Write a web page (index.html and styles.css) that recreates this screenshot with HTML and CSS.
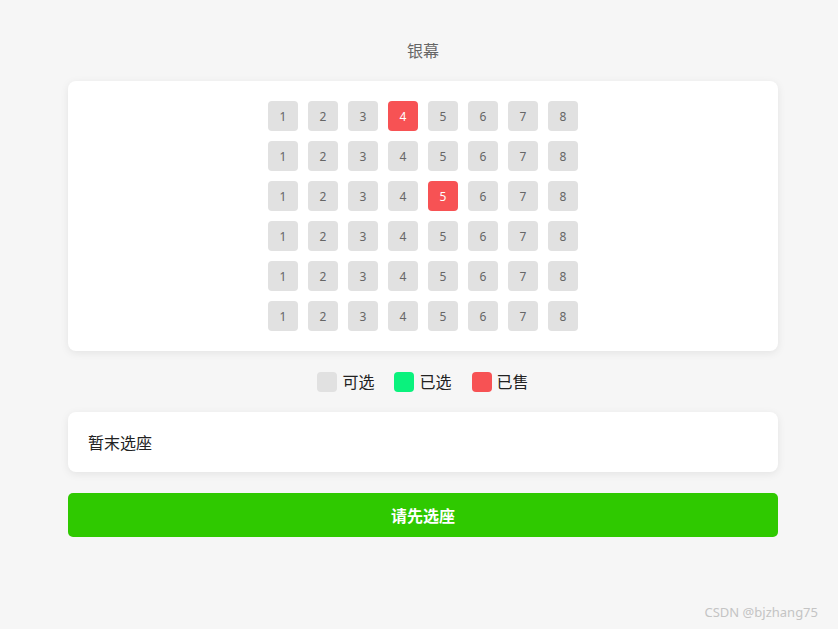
FILE: index.html
```html
<!DOCTYPE html>
<html lang="zh-CN">
<head>
  <meta charset="UTF-8">
  <meta name="viewport" content="width=device-width, initial-scale=1.0">
  <title>选座</title>
  <link rel="stylesheet" href="styles.css">
</head>
<body>
  <div class="page">
    <div class="screen">银幕</div>

    <div class="seat-card">
      <div class="seat-row">
        <div class="seat">1</div><div class="seat">2</div><div class="seat">3</div><div class="seat sold">4</div>
        <div class="seat">5</div><div class="seat">6</div><div class="seat">7</div><div class="seat">8</div>
      </div>
      <div class="seat-row">
        <div class="seat">1</div><div class="seat">2</div><div class="seat">3</div><div class="seat">4</div>
        <div class="seat">5</div><div class="seat">6</div><div class="seat">7</div><div class="seat">8</div>
      </div>
      <div class="seat-row">
        <div class="seat">1</div><div class="seat">2</div><div class="seat">3</div><div class="seat">4</div>
        <div class="seat sold">5</div><div class="seat">6</div><div class="seat">7</div><div class="seat">8</div>
      </div>
      <div class="seat-row">
        <div class="seat">1</div><div class="seat">2</div><div class="seat">3</div><div class="seat">4</div>
        <div class="seat">5</div><div class="seat">6</div><div class="seat">7</div><div class="seat">8</div>
      </div>
      <div class="seat-row">
        <div class="seat">1</div><div class="seat">2</div><div class="seat">3</div><div class="seat">4</div>
        <div class="seat">5</div><div class="seat">6</div><div class="seat">7</div><div class="seat">8</div>
      </div>
      <div class="seat-row">
        <div class="seat">1</div><div class="seat">2</div><div class="seat">3</div><div class="seat">4</div>
        <div class="seat">5</div><div class="seat">6</div><div class="seat">7</div><div class="seat">8</div>
      </div>
    </div>

    <div class="legend">
      <div class="legend-item"><span class="swatch"></span>可选</div>
      <div class="legend-item"><span class="swatch selected"></span>已选</div>
      <div class="legend-item"><span class="swatch sold"></span>已售</div>
    </div>

    <div class="info-card">暂末选座</div>

    <button class="submit-button">请先选座</button>
  </div>

  <div class="watermark">CSDN @bjzhang75</div>
</body>
</html>
```

FILE: styles.css
```css
body {
  margin: 0;
  padding: 0;
  background-color: #f6f6f6;
  font-family: "Noto Sans", "Noto Sans CJK SC", sans-serif;
  color: #333;
}

.page {
  padding: 40px 60px 0 68px;
}

.screen {
  text-align: center;
  font-size: 16px;
  line-height: 22px;
  color: #666;
  margin-bottom: 19px;
}

.seat-card {
  background: white;
  border-radius: 8px;
  box-shadow: 0 2px 8px rgba(0, 0, 0, 0.08);
  padding: 20px 0;
  display: flex;
  flex-direction: column;
  align-items: center;
  gap: 10px;
}

.seat-row {
  display: flex;
  gap: 10px;
}

.seat {
  width: 30px;
  height: 30px;
  border-radius: 4px;
  background-color: #e1e1e1;
  color: #666;
  font-size: 12px;
  display: flex;
  justify-content: center;
  align-items: center;
}

.seat.sold {
  background-color: #f75254;
  color: white;
}

.legend {
  display: flex;
  justify-content: center;
  gap: 20px;
  margin: 21px 0 20px;
}

.legend-item {
  display: flex;
  align-items: center;
  gap: 5px;
  font-size: 16px;
  line-height: 20px;
  color: #222;
}

.swatch {
  width: 20px;
  height: 20px;
  border-radius: 4px;
  background-color: #e1e1e1;
}

.swatch.selected {
  background-color: #0af27d;
}

.swatch.sold {
  background-color: #f75254;
}

.info-card {
  background: white;
  border-radius: 8px;
  box-shadow: 0 2px 8px rgba(0, 0, 0, 0.08);
  height: 60px;
  padding: 0 20px;
  display: flex;
  align-items: center;
  font-size: 16px;
  color: #222;
}

.submit-button {
  display: block;
  width: 100%;
  height: 44px;
  margin-top: 21px;
  border: none;
  border-radius: 5px;
  background-color: #2fc900;
  color: white;
  font-family: "Noto Sans", "Noto Sans CJK SC", sans-serif;
  font-size: 16px;
  font-weight: bold;
  cursor: pointer;
}

.watermark {
  position: absolute;
  right: 20px;
  top: 603px;
  font-size: 13px;
  color: #c4c4c4;
}
```
